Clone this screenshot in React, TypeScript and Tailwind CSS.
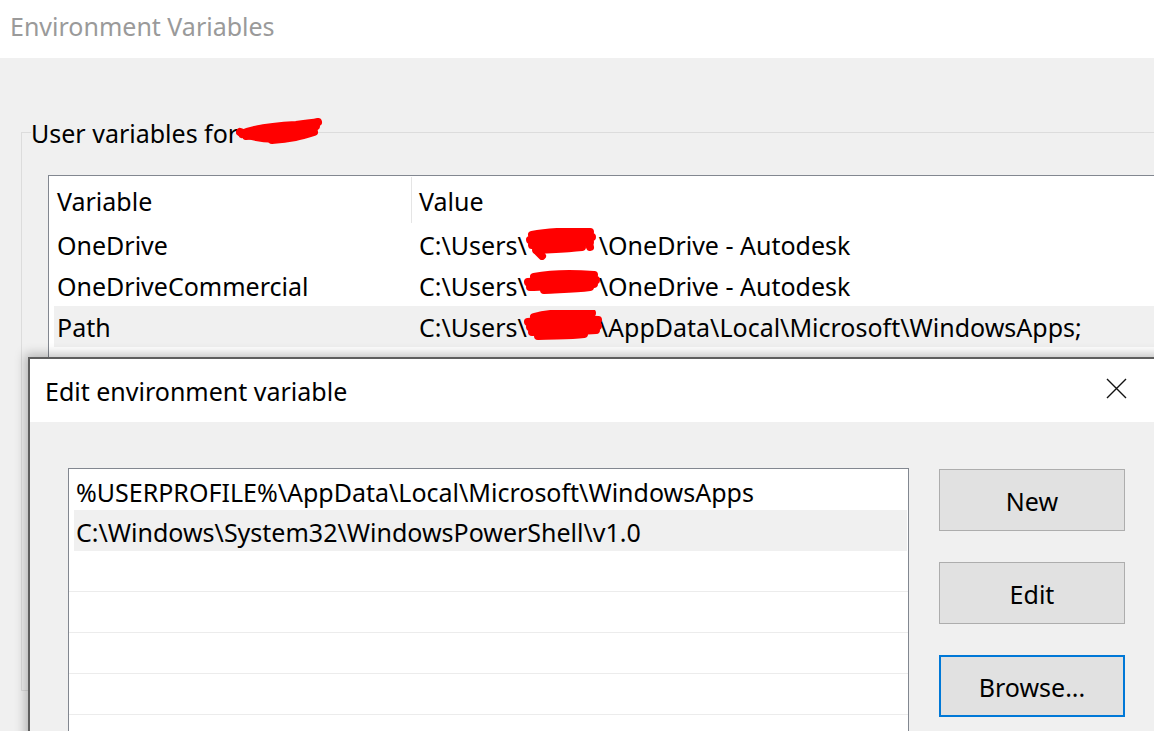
import React from "react";

type ScribbleProps = { w: number; h: number; paths: string[]; sw?: number; className: string };

const Scribble = ({ w, h, paths, sw = 8, className }: ScribbleProps) => (
  <svg width={w} height={h} viewBox={`0 0 ${w} ${h}`} fill="none" className={className}>
    {paths.map((d, i) => (
      <path key={i} d={d} stroke="#ff0000" strokeWidth={sw} strokeLinecap="round" strokeLinejoin="round" />
    ))}
  </svg>
);

const Redacted = ({ paths, w, h, left, top }: { paths: string[]; w: number; h: number; left: string; top: string }) => (
  <span className="relative inline-block w-[72px] h-[1em] align-baseline">
    <Scribble w={w} h={h} paths={paths} sw={8} className={`absolute ${left} ${top}`} />
  </span>
);

const bgRows = [
  {
    name: "OneDrive",
    pre: "C:\\Users\\",
    post: "\\OneDrive - Autodesk",
    paths: [
      "M8,7 C22,4 42,3 66,4",
      "M6,12 C25,9 45,9 68,9",
      "M8,17 C25,15 45,15 66,14",
      "M12,22 C25,21 40,21 58,19",
      "M14,24 L18,28",
      "M62,5 L66,19",
    ],
    selected: false,
  },
  {
    name: "OneDriveCommercial",
    pre: "C:\\Users\\",
    post: "\\OneDrive - Autodesk",
    paths: [
      "M10,8 C25,5 45,4 70,6",
      "M4,13 C25,11 45,10 72,11",
      "M6,18 C25,17 50,17 70,15",
      "M20,21 C35,20 50,20 66,18",
    ],
    selected: false,
  },
  {
    name: "Path",
    pre: "C:\\Users\\",
    post: "\\AppData\\Local\\Microsoft\\WindowsApps;",
    paths: [
      "M10,7 C25,3 45,2 68,3",
      "M4,12 C25,9 50,8 74,10",
      "M6,17 C30,14 50,14 74,16",
      "M8,22 C25,21 45,22 72,20",
      "M14,26 C30,25 45,26 60,24",
    ],
    selected: true,
  },
];

export default function App() {
  return (
    <div className="relative w-[1154px] h-[731px] overflow-hidden bg-[#f0f0f0] text-black font-['Noto_Sans',sans-serif] text-[25px]">
      {/* Background window title bar */}
      <div className="h-[58px] bg-white flex items-center pl-[10px] pb-[4px] text-[#9a9a9a]">Environment Variables</div>

      {/* Group box */}
      <fieldset className="mt-[57px] ml-[21px] w-[1200px] h-[576px] border border-[#dcdcdc] border-solid">
        <legend className="ml-[9px] leading-[34px] pt-[1px] whitespace-nowrap">
          User variables for
          <span className="relative inline-block w-[80px] h-[1em]">
            <Scribble
              w={90}
              h={32}
              sw={8}
              paths={[
                "M6,20 C20,14 40,12 60,11 C70,10 78,9 82,8",
                "M10,22 C30,19 50,18 78,14",
                "M4,18 C15,23 30,26 50,24",
                "M36,26 C55,25 65,22 78,18",
                "M20,16 C40,14 60,13 80,12",
              ]}
              className="absolute left-[-2px] top-[-4px]"
            />
          </span>
        </legend>

        {/* Variables table */}
        <div className="mt-[25px] ml-[26px] w-[1150px] h-[500px] bg-white border border-[#828790]">
          <div className="flex h-[48px]">
            <div className="w-[363px] flex items-center pl-[8px] pt-[3px] border-r border-[#e5e5e5] my-[1px]">Variable</div>
            <div className="flex items-center pl-[7px] pt-[3px]">Value</div>
          </div>
          {bgRows.map((r) => (
            <div key={r.name} className={`flex h-[41px] items-center ml-[5px] pt-[2px] ${r.selected ? "bg-[#f0f0f0]" : ""}`}>
              <div className="w-[358px] pl-[3px]">{r.name}</div>
              <div className="pl-[7px] whitespace-nowrap">
                {r.pre}
                <Redacted paths={r.paths} w={80} h={32} left="left-[-3px]" top="top-[-2px]" />
                {r.post}
              </div>
            </div>
          ))}
          <div className="h-[41px] ml-[5px]" />
        </div>
      </fieldset>

      {/* Edit dialog */}
      <div className="absolute left-[28px] top-[357px] w-[1160px] h-[420px] bg-[#f0f0f0] border-2 border-[#5e5e5e] shadow-[0_0_10px_3px_rgba(0,0,0,0.25)] flex flex-col">
        <div className="h-[63px] bg-white flex items-center justify-between pl-[15px] pr-[59px] shrink-0">
          <span className="pt-[3px]">Edit environment variable</span>
          <svg width="21" height="21" viewBox="0 0 21 21" className="mt-[-4px]">
            <path d="M1 1 L20 20 M20 1 L1 20" stroke="#111" strokeWidth="1.4" />
          </svg>
        </div>
        <div className="flex pt-[46px] pl-[38px] gap-[30px]">
          <div className="w-[841px] h-[300px] bg-white border border-[#828790]">
            <div className="h-[41px] flex items-center pl-[2px] ml-[5px] mr-[1px] pt-[6px]">
              %USERPROFILE%\AppData\Local\Microsoft\WindowsApps
            </div>
            <div className="h-[41px] flex items-center pl-[2px] ml-[5px] mr-[1px] pt-[5px] bg-[#f0f0f0]">
              C:\Windows\System32\WindowsPowerShell\v1.0
            </div>
            <div className="h-[41px] border-b border-[#ececec]" />
            <div className="h-[41px] border-b border-[#ececec]" />
            <div className="h-[41px] border-b border-[#ececec]" />
            <div className="h-[41px] border-b border-[#ececec]" />
          </div>
          <div className="flex flex-col gap-[31px] pt-[1px]">
            <button className="w-[186px] h-[62px] bg-[#e1e1e1] border border-[#adadad] flex items-center justify-center pt-[3px]">New</button>
            <button className="w-[186px] h-[62px] bg-[#e1e1e1] border border-[#adadad] flex items-center justify-center pt-[3px]">Edit</button>
            <button className="w-[186px] h-[62px] bg-[#e1e1e1] border-2 border-[#0078d7] flex items-center justify-center pt-[3px]">Browse...</button>
          </div>
        </div>
      </div>
    </div>
  );
}
